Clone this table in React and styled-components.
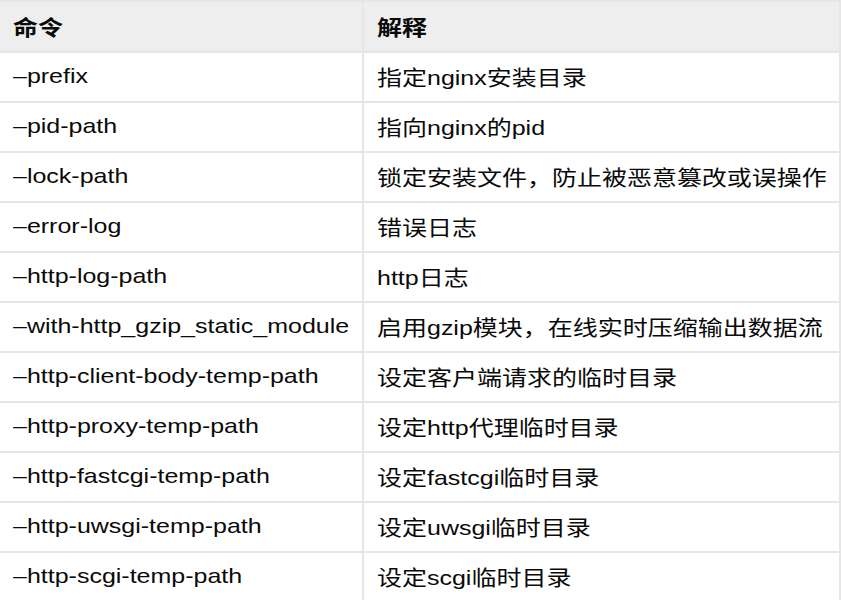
import React from 'react';
import styled, { createGlobalStyle } from 'styled-components';

const GlobalStyle = createGlobalStyle`
  html, body {
    margin: 0;
    padding: 0;
    background: #fff;
  }
  body {
    font-family: "Liberation Sans", Arial, "Noto Sans CJK SC", sans-serif;
    color: #0a0a0a;
  }
`;

const StyledTable = styled.div`
  width: 841px;
  height: 600px;
  overflow: hidden;
  border-top: 2px solid #e6e6e6;
  border-right: 2px solid #e6e6e6;
  box-sizing: border-box;
`;

const Row = styled.div`
  display: grid;
  grid-template-columns: 362px 1fr;
  height: 50px;
  box-sizing: border-box;
  border-bottom: 2px solid #e6e6e6;
  background: ${props => (props.head ? '#eeeeee' : '#fff')};
  font-weight: ${props => (props.head ? 700 : 400)};

  &:first-child {
    height: 51px;
  }
`;

const Cell = styled.div`
  display: flex;
  align-items: center;
  padding: 0 0 2px 13px;
  box-sizing: border-box;
  white-space: nowrap;
  overflow: hidden;

  & + & {
    border-left: 2px solid #e6e6e6;
  }
`;

const Text = styled.span`
  display: inline-block;
  font-size: 21px;
  transform: scaleX(1.19);
  transform-origin: left center;
`;

const rows = [
  ['–prefix', '指定nginx安装目录'],
  ['–pid-path', '指向nginx的pid'],
  ['–lock-path', '锁定安装文件，防止被恶意篡改或误操作'],
  ['–error-log', '错误日志'],
  ['–http-log-path', 'http日志'],
  ['–with-http_gzip_static_module', '启用gzip模块，在线实时压缩输出数据流'],
  ['–http-client-body-temp-path', '设定客户端请求的临时目录'],
  ['–http-proxy-temp-path', '设定http代理临时目录'],
  ['–http-fastcgi-temp-path', '设定fastcgi临时目录'],
  ['–http-uwsgi-temp-path', '设定uwsgi临时目录'],
  ['–http-scgi-temp-path', '设定scgi临时目录'],
];

export default function App() {
  return (
    <>
      <GlobalStyle />
      <StyledTable>
        <Row head>
          <Cell><Text>命令</Text></Cell>
          <Cell><Text>解释</Text></Cell>
        </Row>
        {rows.map(([cmd, desc]) => (
          <Row key={cmd}>
            <Cell><Text>{cmd}</Text></Cell>
            <Cell><Text>{desc}</Text></Cell>
          </Row>
        ))}
      </StyledTable>
    </>
  );
}
